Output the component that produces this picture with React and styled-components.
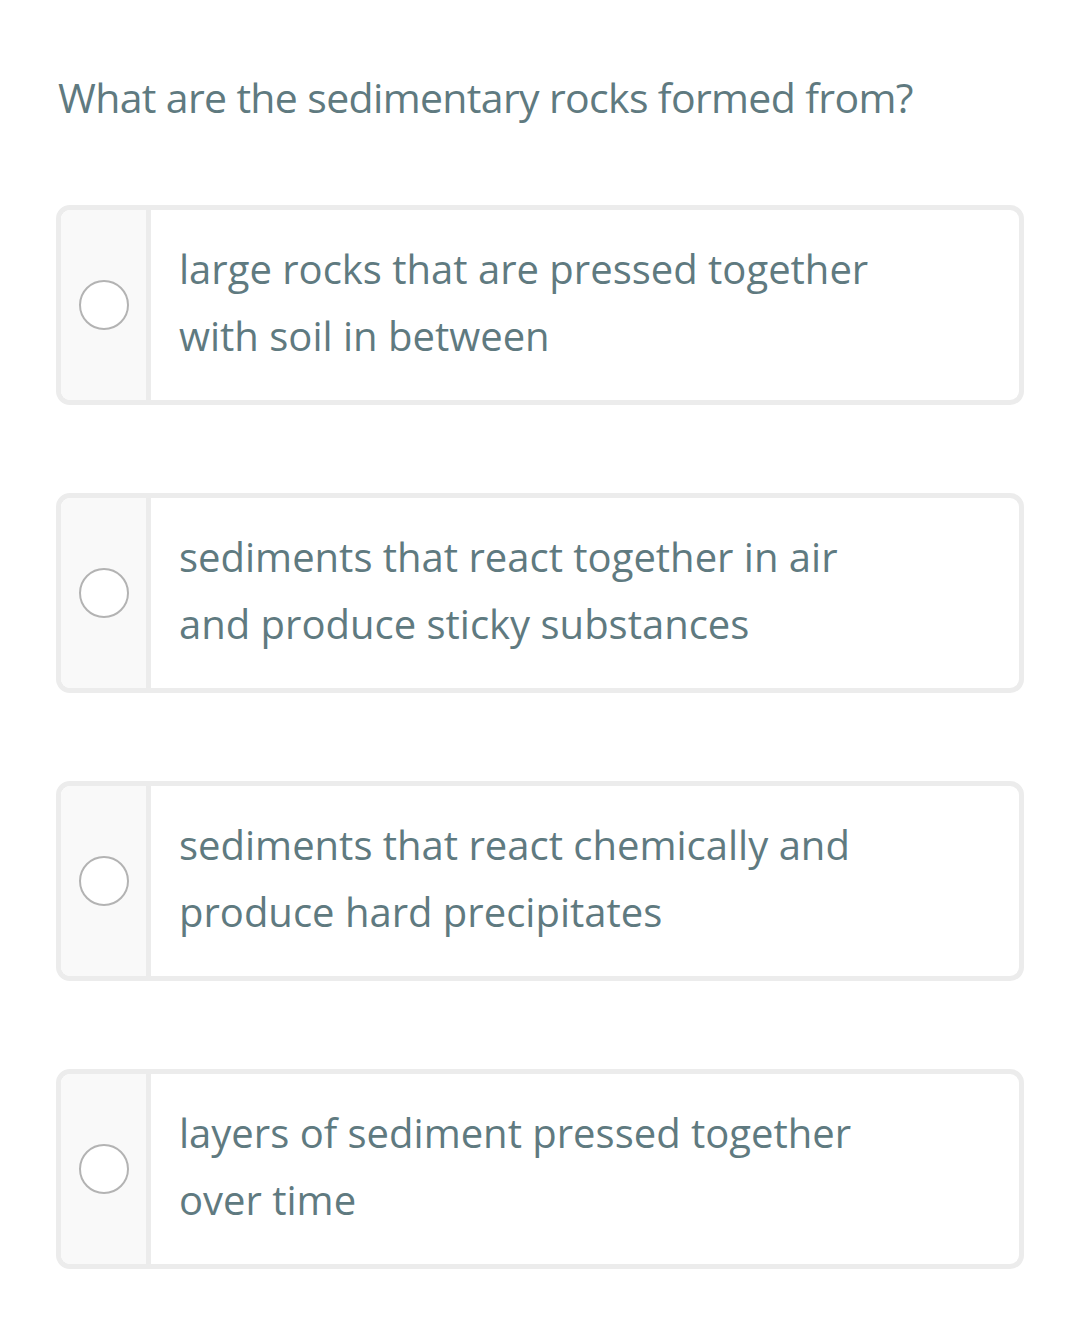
import styled, { createGlobalStyle } from 'styled-components'

const GlobalStyle = createGlobalStyle`
  body {
    margin: 0;
    background: #ffffff;
    font-family: "Open Sans", "Noto Sans", sans-serif;
  }
`

const Page = styled.div`
  padding: 66px 56px 40px 56px;
  color: #5f7a80;
`

const Question = styled.h1`
  margin: 0 0 76px 2px;
  font-size: 41px;
  font-weight: 400;
  line-height: 63px;
  letter-spacing: -0.65px;
`

const Options = styled.div`
  display: flex;
  flex-direction: column;
  gap: 88px;
`

const Option = styled.label`
  display: flex;
  height: 200px;
  box-sizing: border-box;
  border: 5px solid #ececec;
  border-radius: 14px;
  overflow: hidden;
  cursor: pointer;
`

const RadioCell = styled.div`
  width: 85px;
  flex-shrink: 0;
  background: #f9f9f9;
  border-right: 5px solid #ececec;
  display: flex;
  align-items: center;
  justify-content: center;
`

const Radio = styled.span`
  width: 46px;
  height: 46px;
  border-radius: 50%;
  border: 2px solid #b3b3b3;
  background: #ffffff;
`

const Text = styled.div`
  flex: 1;
  display: flex;
  align-items: center;
  padding: 0 28px 6px 28px;
  font-size: 40px;
  line-height: 67px;
`

const answers = [
  ['large rocks that are pressed together', 'with soil in between'],
  ['sediments that react together in air', 'and produce sticky substances'],
  ['sediments that react chemically and', 'produce hard precipitates'],
  ['layers of sediment pressed together', 'over time'],
]

export default function App() {
  return (
    <>
      <GlobalStyle />
      <Page>
        <Question>What are the sedimentary rocks formed from?</Question>
        <Options>
          {answers.map((lines, i) => (
            <Option key={i}>
              <RadioCell>
                <Radio />
              </RadioCell>
              <Text>
                <span>
                  {lines[0]}
                  <br />
                  {lines[1]}
                </span>
              </Text>
            </Option>
          ))}
        </Options>
      </Page>
    </>
  )
}
